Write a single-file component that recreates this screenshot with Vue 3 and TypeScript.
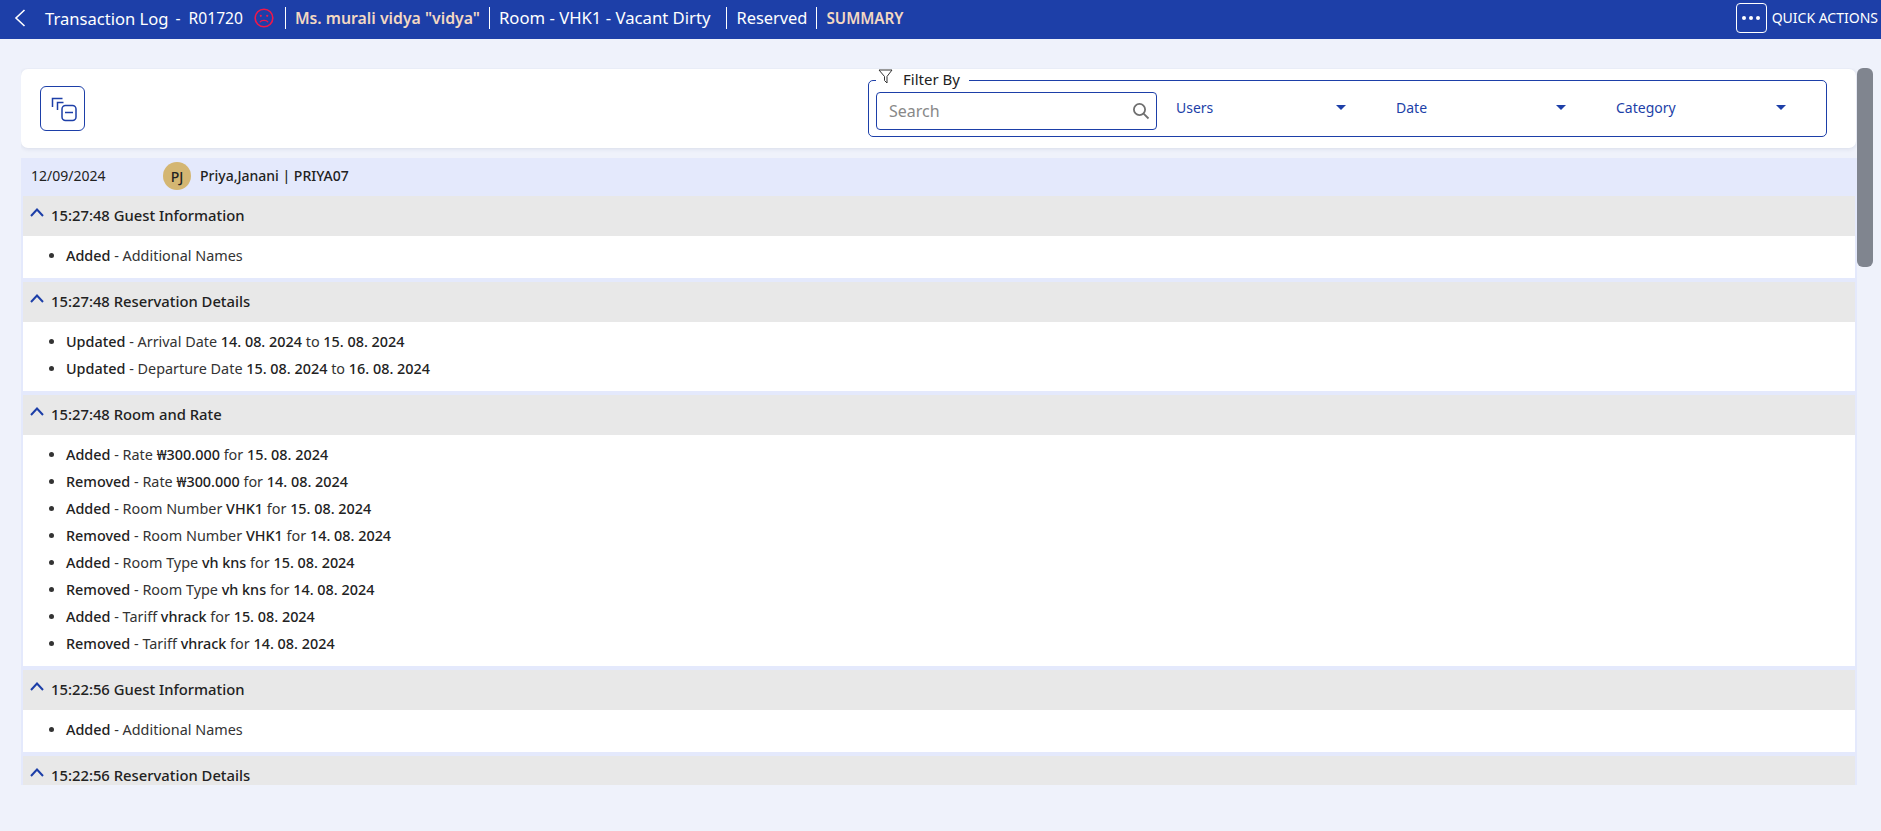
<script setup lang="ts">
import { ref } from 'vue';

interface LogRow {
  action: string;
  // odd indexes are the bold values
  parts: string[];
}
interface LogSection {
  time: string;
  title: string;
  rows: LogRow[];
}

const search = ref('');
const filters = ['Users', 'Date', 'Category'];

function roomRate(oldDate: string, newDate: string): LogRow[] {
  const rows: LogRow[] = [];
  const items = [
    ['Rate ', '₩300.000'],
    ['Room Number ', 'VHK1'],
    ['Room Type ', 'vh kns'],
    ['Tariff ', 'vhrack'],
  ];
  for (const item of items) {
    rows.push({ action: 'Added', parts: [item[0], item[1], ' for ', newDate] });
    rows.push({ action: 'Removed', parts: [item[0], item[1], ' for ', oldDate] });
  }
  return rows;
}

const sections: LogSection[] = [
  { time: '15:27:48', title: 'Guest Information', rows: [{ action: 'Added', parts: ['Additional Names'] }] },
  {
    time: '15:27:48',
    title: 'Reservation Details',
    rows: [
      { action: 'Updated', parts: ['Arrival Date ', '14. 08. 2024', ' to ', '15. 08. 2024'] },
      { action: 'Updated', parts: ['Departure Date ', '15. 08. 2024', ' to ', '16. 08. 2024'] },
    ],
  },
  { time: '15:27:48', title: 'Room and Rate', rows: roomRate('14. 08. 2024', '15. 08. 2024') },
  { time: '15:22:56', title: 'Guest Information', rows: [{ action: 'Added', parts: ['Additional Names'] }] },
  { time: '15:22:56', title: 'Reservation Details', rows: [] },
];
</script>

<template>
  <div class="page">
    <header class="topbar">
      <svg class="back" width="12" height="20" viewBox="0 0 12 20">
        <polyline points="10.5,2 2,10 10.5,18" fill="none" stroke="#fff" stroke-width="1.6" />
      </svg>
      <span class="title">Transaction Log</span>
      <span class="resno">- R01720</span>
      <svg class="sad" width="20" height="20" viewBox="0 0 20 20">
        <circle cx="10" cy="10" r="8.8" fill="none" stroke="#f0184a" stroke-width="1.6" />
        <circle cx="6.8" cy="7.8" r="1.1" fill="#f0184a" />
        <circle cx="13.2" cy="7.8" r="1.1" fill="#f0184a" />
        <path d="M6 14.2c1.2-2.4 6.8-2.4 8 0" fill="none" stroke="#f0184a" stroke-width="1.4" />
      </svg>
      <span class="crumb accent name">Ms. murali vidya "vidya"</span>
      <span class="crumb room">Room - VHK1 - Vacant Dirty</span>
      <span class="crumb">Reserved</span>
      <span class="crumb accent summary">SUMMARY</span>
      <div class="quick">
        <button class="quick-btn" type="button" aria-label="Quick actions">
          <i></i><i></i><i></i>
        </button>
        <span>QUICK ACTIONS</span>
      </div>
    </header>

    <main class="content">
      <div class="scroller">
        <section class="toolbar">
          <button class="collapse" type="button" aria-label="Collapse all">
            <svg width="43" height="43" viewBox="1 1 43 43" fill="none" stroke="#1d3fa8" stroke-width="1.5">
              <path d="M12.5 21V12.5h10" />
              <path d="M17.5 24V16.5h6" />
              <rect x="22" y="19.5" width="14" height="15" rx="3.5" />
              <path d="M25 26.5h8" />
            </svg>
          </button>
          <fieldset class="filters">
            <legend>
              <svg width="15" height="15" viewBox="0 0 15 15" fill="none" stroke="#333" stroke-width="1">
                <path d="M1 1h13L9 7.5V14L6.5 11.5V7.5z" />
              </svg>
              <span>Filter By</span>
            </legend>
            <div class="filter-row">
              <label class="search">
                <input v-model="search" type="text" placeholder="Search" />
                <svg width="18" height="18" viewBox="0 0 18 18" fill="none" stroke="#6f6f6f" stroke-width="1.8">
                  <circle cx="7.5" cy="7.5" r="5.6" />
                  <path d="M11.6 11.6 16.5 16.5" />
                </svg>
              </label>
              <div v-for="f in filters" :key="f" class="select">
                <span>{{ f }}</span>
                <i class="caret"></i>
              </div>
            </div>
          </fieldset>
        </section>

        <div class="day">
          <div class="day-row">
            <span class="date">12/09/2024</span>
            <span class="avatar">PJ</span>
            <span class="user">Priya,Janani | PRIYA07</span>
          </div>
          <div v-for="s in sections" :key="s.time + s.title" class="log">
            <div class="log-head">
              <svg width="14" height="9" viewBox="0 0 14 9">
                <polyline points="1,8 7,1.5 13,8" fill="none" stroke="#1d3fa8" stroke-width="2" />
              </svg>
              <span>{{ s.time }} {{ s.title }}</span>
            </div>
            <ul v-if="s.rows.length" class="log-body">
              <li v-for="(row, i) in s.rows" :key="i">
                <b>{{ row.action }}</b> -
                <template v-for="(p, j) in row.parts" :key="j">
                  <b v-if="j % 2 == 1">{{ p }}</b>
                  <template v-else>{{ p }}</template>
                </template>
              </li>
            </ul>
          </div>
        </div>
      </div>
      <div class="thumb"></div>
    </main>
  </div>
</template>

<style>
html,
body {
  margin: 0;
  background: #eff2fb;
}
</style>

<style scoped>
.page {
  height: 831px;
  display: flex;
  flex-direction: column;
  background: #eff2fb;
  font-family: "Noto Sans", sans-serif;
  color: #222;
  overflow: hidden;
}

.topbar {
  height: 39px;
  box-sizing: border-box;
  flex: none;
  display: flex;
  align-items: center;
  padding: 0 3px 3px 14px;
  background: #1d3fa8;
  color: #fff;
  font-size: 16.4px;
  white-space: nowrap;
}
.back {
  margin-right: 19px;
}
.title {
  font-size: 16.6px;
}
.resno {
  margin-left: 7px;
  font-size: 15.6px;
  word-spacing: 4px;
}
.sad {
  margin: 0 2px 0 11px;
}
.crumb {
  margin-left: 9px;
  padding-left: 9px;
  border-left: 1px solid #fff;
  line-height: 22px;
}
.crumb.room {
  padding-right: 7px;
  font-size: 16.7px;
}
.accent {
  color: #f3d8c2;
  font-weight: 600;
}
.name {
  font-size: 15.8px;
}
.summary {
  font-size: 15.2px;
}
.quick {
  margin-left: auto;
  display: flex;
  align-items: center;
  gap: 5px;
  font-size: 14px;
}
.quick span {
  margin-top: -2px;
}
.quick-btn {
  width: 31px;
  height: 30px;
  padding: 0;
  display: flex;
  align-items: center;
  justify-content: center;
  gap: 3px;
  background: transparent;
  border: 1px solid #fff;
  border-radius: 4px;
}
.quick-btn i {
  width: 4px;
  height: 4px;
  border-radius: 50%;
  background: #fff;
}

.content {
  position: relative;
  width: 1852px;
  height: 717px;
  margin: 29px 0 0 21px;
}
.scroller {
  width: 1836px;
  height: 717px;
  overflow: hidden;
}
.thumb {
  position: absolute;
  top: 0;
  right: 0;
  width: 16px;
  height: 199px;
  background: #80858f;
  border-radius: 6px;
}

.toolbar {
  height: 79px;
  margin: 1px 1px 10px 0;
  padding: 0 29px 0 19px;
  box-sizing: border-box;
  display: flex;
  align-items: center;
  justify-content: space-between;
  background: #fff;
  border-radius: 7px;
  box-shadow: 0 1px 4px rgba(30, 40, 80, 0.1);
}
.collapse {
  width: 45px;
  height: 45px;
  padding: 0;
  display: flex;
  align-items: center;
  justify-content: center;
  background: #fff;
  border: 1px solid #1d3fa8;
  border-radius: 6px;
}
.filters {
  align-self: flex-start;
  width: 959px;
  box-sizing: border-box;
  margin: 0;
  padding: 1px 0 6px 7px;
  border: 1px solid #1d3fa8;
  border-radius: 5px;
}
.filters legend {
  display: flex;
  align-items: center;
  gap: 10px;
  height: 22px;
  padding: 0 9px 0 2px;
  font-size: 15px;
  color: #222;
}
.filters legend svg {
  margin-top: -7px;
}
.filters legend span {
  margin-top: -3px;
}
.filter-row {
  display: flex;
  align-items: flex-start;
  gap: 50px;
}
.search {
  width: 281px;
  height: 38px;
  box-sizing: border-box;
  display: flex;
  align-items: center;
  padding: 0 6px 0 12px;
  border: 1px solid #1d3fa8;
  border-radius: 4px;
  margin-right: -31px;
}
.search input {
  flex: 1;
  min-width: 0;
  padding: 0;
  border: 0;
  outline: 0;
  font: 400 16px "Noto Sans", sans-serif;
  color: #222;
}
.search input::placeholder {
  color: #888;
  opacity: 1;
}
.select {
  width: 170px;
  height: 30px;
  display: flex;
  align-items: center;
  justify-content: space-between;
  font-size: 14px;
  color: #1d3fa8;
}
.caret {
  width: 0;
  height: 0;
  border-left: 5px solid transparent;
  border-right: 5px solid transparent;
  border-top: 5px solid #1d3fa8;
}

.day {
  background: #e4e9fc;
}
.day-row {
  height: 38px;
  box-sizing: border-box;
  display: flex;
  align-items: center;
  padding: 0 0 2px 10px;
  font-size: 14px;
}
.date {
  width: 132px;
  margin-top: -2px;
}
.avatar {
  width: 28px;
  height: 28px;
  display: flex;
  align-items: center;
  justify-content: center;
  margin-right: 9px;
  border-radius: 50%;
  background: #d4b672;
  font-weight: 500;
}
.user {
  margin-top: -2px;
  font-weight: 500;
}

.log {
  margin: 0 2px 4px;
}
.log-head {
  height: 39.5px;
  box-sizing: border-box;
  display: flex;
  align-items: center;
  gap: 7px;
  padding: 0 0 2px 7px;
  background: #e8e8e8;
  font-size: 14.8px;
  font-weight: 500;
}
.log-head svg {
  margin-top: -5px;
}
.log-body {
  margin: 0;
  padding: 7.5px 0 8px 43px;
  background: #fff;
  font-size: 14.4px;
  color: #333;
}
.log-body li {
  height: 27px;
  line-height: 26px;
}
.log-body b {
  font-weight: 500;
  color: #222;
}
</style>
